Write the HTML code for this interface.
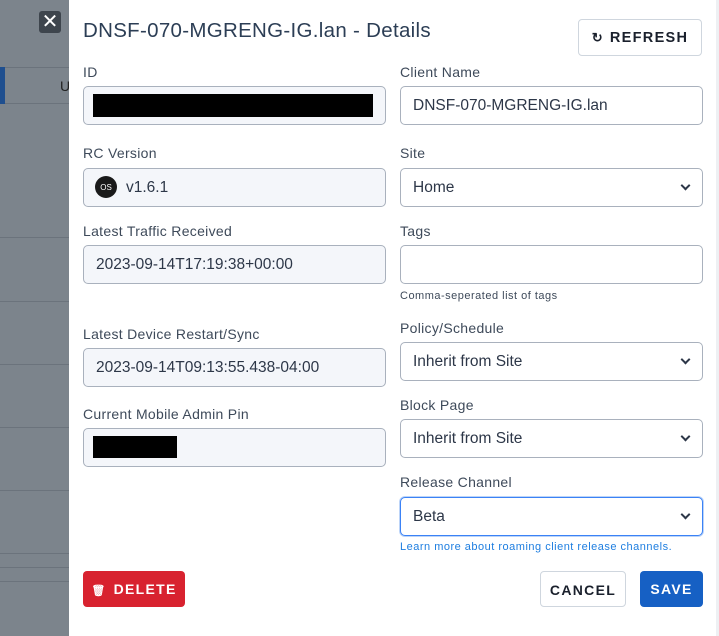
<!DOCTYPE html>
<html><head><style>
*{box-sizing:border-box;margin:0;padding:0}
body{width:719px;height:636px;overflow:hidden;position:relative;font-family:"Liberation Sans",sans-serif;background:#7d858d;color:#2d3748}
.bg{position:absolute;left:0;top:0;width:69px;height:636px;background:#7c848c}
.ln{position:absolute;left:0;width:69px;height:1px;background:#6b737c}
.panel{position:absolute;left:69px;top:0;width:648px;height:636px;background:#fff}
.strip{position:absolute;left:716px;top:0;width:3px;height:636px;background:#eef0f3}
.lbl{position:absolute;font-size:14px;color:#3e4a5a;letter-spacing:.3px}
.in{position:absolute;height:39px;border:1px solid #a9b1bd;border-radius:5px;background:#fff;font-size:15.5px;color:#2d3748;padding-left:12px;line-height:37px}
.ro{background:#f4f6fa}
.chev{position:absolute;right:13px;top:13px;width:7px;height:7px;border-right:2px solid #2d3748;border-bottom:2px solid #2d3748;transform:rotate(45deg)}
.blk{position:absolute;background:#000}
.btn{position:absolute;height:36px;border-radius:4px;font-weight:bold;font-size:14px;letter-spacing:1.3px;text-align:center;line-height:36px}
.hint{position:absolute;font-size:11px;letter-spacing:.5px}
</style></head><body>
<div class="bg"></div>
<div style="position:absolute;left:0;top:67px;width:69px;height:37px;border-top:1px solid #6b737c;border-bottom:1px solid #6b737c"></div>
<div style="position:absolute;left:0;top:67px;width:5px;height:37px;background:#1f4f8f"></div>
<div style="position:absolute;left:60px;top:78px;font-size:14px;color:#222">U</div>
<div class="ln" style="top:237px"></div><div class="ln" style="top:301px"></div><div class="ln" style="top:364px"></div><div class="ln" style="top:427px"></div><div class="ln" style="top:490px"></div><div class="ln" style="top:553px"></div><div class="ln" style="top:567px"></div><div class="ln" style="top:581px"></div>
<div style="position:absolute;left:39px;top:11px;width:22px;height:22px;border-radius:3px;background:#3e454d;color:#fff;font-size:20px;line-height:22px;text-align:center">✕</div>
<div class="panel"></div>
<div class="strip"></div>
<div style="position:absolute;left:83px;top:19px;font-size:20.5px;color:#2c3e55;letter-spacing:.3px">DNSF-070-MGRENG-IG.lan - Details</div>
<div class="btn" style="left:578px;top:19px;width:124px;height:37px;border:1px solid #cfd6de;color:#1a202c;background:#fff;font-size:14.5px"><span style="font-size:13px;margin-right:6px">↻</span>REFRESH</div>

<div class="lbl" style="left:83px;top:64px">ID</div>
<div class="in ro" style="left:83px;top:86px;width:303px"></div>
<div class="blk" style="left:93px;top:94px;width:280px;height:23px"></div>
<div class="lbl" style="left:400px;top:64px">Client Name</div>
<div class="in" style="left:400px;top:86px;width:303px">DNSF-070-MGRENG-IG.lan</div>

<div class="lbl" style="left:83px;top:145px">RC Version</div>
<div class="in ro" style="left:83px;top:168px;width:303px;padding-left:42px">v1.6.1</div>
<div style="position:absolute;left:95px;top:176px;width:22px;height:22px;border-radius:50%;background:#1a1a1a;color:#fff;font-size:8px;text-align:center;line-height:24px">OS</div>
<div class="lbl" style="left:400px;top:145px">Site</div>
<div class="in" style="left:400px;top:168px;width:303px">Home<div class="chev"></div></div>

<div class="lbl" style="left:83px;top:223px">Latest Traffic Received</div>
<div class="in ro" style="left:83px;top:245px;width:303px">2023-09-14T17:19:38+00:00</div>
<div class="lbl" style="left:400px;top:223px">Tags</div>
<div class="in" style="left:400px;top:245px;width:303px"></div>
<div class="hint" style="left:400px;top:290px;color:#3e4a5a">Comma-seperated list of tags</div>

<div class="lbl" style="left:83px;top:326px">Latest Device Restart/Sync</div>
<div class="in ro" style="left:83px;top:348px;width:303px">2023-09-14T09:13:55.438-04:00</div>
<div class="lbl" style="left:400px;top:320px">Policy/Schedule</div>
<div class="in" style="left:400px;top:342px;width:303px">Inherit from Site<div class="chev"></div></div>

<div class="lbl" style="left:83px;top:406px">Current Mobile Admin Pin</div>
<div class="in ro" style="left:83px;top:428px;width:303px"></div>
<div class="blk" style="left:93px;top:436px;width:84px;height:22px"></div>
<div class="lbl" style="left:400px;top:397px">Block Page</div>
<div class="in" style="left:400px;top:419px;width:303px">Inherit from Site<div class="chev"></div></div>

<div class="lbl" style="left:400px;top:474px">Release Channel</div>
<div class="in" style="left:400px;top:497px;width:303px;border:1px solid #3b82f6;box-shadow:0 0 0 1px #bcd4f8">Beta<div class="chev"></div></div>
<div class="hint" style="left:400px;top:541px;color:#1e7ee0">Learn more about roaming client release channels.</div>

<div class="btn" style="left:83px;top:571px;width:102px;background:#d8222f;color:#fff"><span style="font-size:11px;margin-right:7px">🗑</span>DELETE</div>
<div class="btn" style="left:540px;top:571px;width:86px;border:1px solid #cfd6de;color:#1a202c;background:#fff">CANCEL</div>
<div class="btn" style="left:640px;top:571px;width:63px;background:#1660c4;color:#fff">SAVE</div>
</body></html>
